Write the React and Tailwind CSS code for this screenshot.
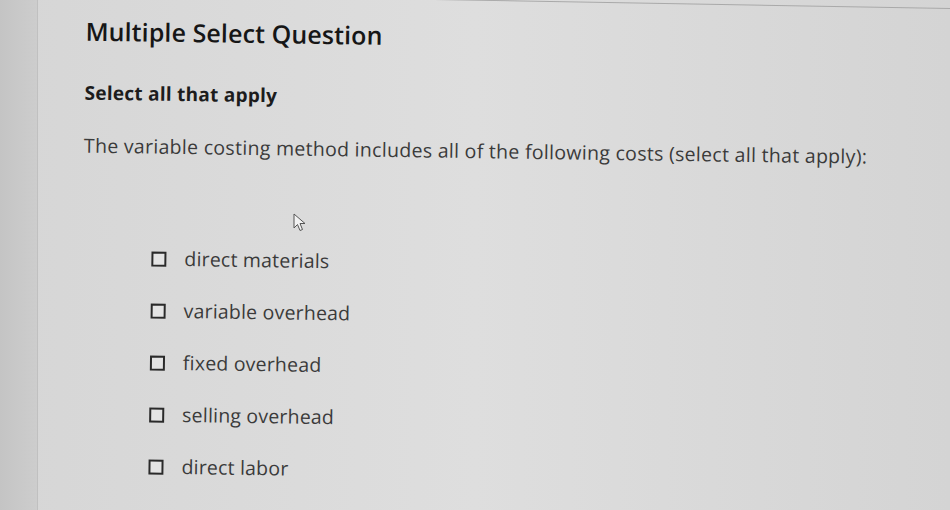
import React from "react";

const options = [
  "direct materials",
  "variable overhead",
  "fixed overhead",
  "selling overhead",
  "direct labor",
];

function Cursor() {
  return (
    <svg width="14" height="20" viewBox="0 0 14 20" className="absolute left-[293px] top-[213px]">
      <path
        d="M1 1 L1 15 L4.5 11.5 L7 17.5 L9.5 16.5 L7 10.5 L12 10.5 Z"
        fill="#f2f2f2"
        stroke="#555"
        strokeWidth="1"
        strokeLinejoin="round"
      />
    </svg>
  );
}

export default function App() {
  return (
    <div className="relative w-[950px] h-[510px] overflow-hidden flex bg-gradient-to-r from-[#d6d6d6] via-[#dedede] to-[#d4d4d4] font-['Open_Sans',sans-serif]">
      <div className="w-[38px] shrink-0 bg-gradient-to-r from-[#c4c4c4] to-[#cdcdcd] border-r border-[#c0c0c0]" />
      <div className="absolute left-[130px] right-0 top-[8px] h-px bg-[#a9a9a9] rotate-[1deg] origin-top-right" />
      <div className="flex-1 pl-[48px] pt-[13px] rotate-[0.8deg] origin-top-left">
        <h1 className="text-[25px] leading-[34px] font-semibold text-[#161616] tracking-[0.1px]">
          Multiple Select Question
        </h1>
        <p className="mt-[33px] text-[19px] leading-[24px] font-bold text-[#1c1c1c] tracking-[0.25px]">
          Select all that apply
        </p>
        <p className="mt-[28px] text-[19.5px] leading-[26px] text-[#3a3a3a] tracking-[0.3px]">
          The variable costing method includes all of the following costs (select all that apply):
        </p>
        <div className="mt-[87px] ml-[69px] flex flex-col gap-[28px]">
          {options.map((o) => (
            <div key={o} className="flex items-center gap-[18px] h-[24px]">
              <span className="w-[15px] h-[15px] border-[2.5px] border-[#2a2a2a] bg-[#e4e4e4]" />
              <span className="text-[19.5px] text-[#3a3a3a] tracking-[0.2px]">{o}</span>
            </div>
          ))}
        </div>
      </div>
      <Cursor />
    </div>
  );
}
